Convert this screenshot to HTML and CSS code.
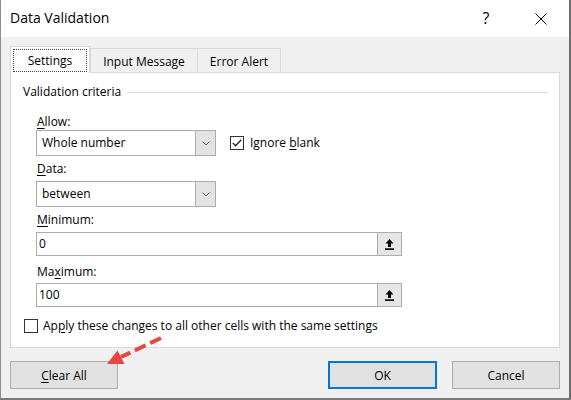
FILE: index.html
```html
<!DOCTYPE html>
<html>
<head>
<meta charset="utf-8">
<title>Data Validation</title>
<link rel="stylesheet" href="styles.css">
</head>
<body>
<div class="window">
  <div class="titlebar">
    <span class="title">Data Validation</span>
    <span class="help">?</span>
    <svg class="close" width="12" height="12" viewBox="0 0 12 12"><path d="M0.5 0.5 L11.5 11.5 M11.5 0.5 L0.5 11.5" stroke="#000" stroke-width="1" fill="none"/></svg>
  </div>
  <div class="content">
    <div class="tabs">
      <div class="tab active"><span class="focus">Settings</span></div>
      <div class="tab t2">Input Message</div>
      <div class="tab t3">Error Alert</div>
    </div>
    <div class="panel">
      <div class="group-head"><span>Validation criteria</span><span class="rule"></span></div>
      <div class="form">
        <div class="label l-allow"><u>A</u>llow:</div>
        <div class="row">
          <div class="select">
            <span class="field">Whole number</span>
            <span class="drop"><svg width="8" height="5" viewBox="0 0 8 5"><path d="M0.5 0.5 L4 4 L7.5 0.5" stroke="#606060" stroke-width="1" fill="none"/></svg></span>
          </div>
          <div class="check">
            <span class="box"><svg width="12" height="12" viewBox="0 0 12 12"><path d="M1.8 6 L4.6 8.8 L10.3 2.8" stroke="#222" stroke-width="1.3" fill="none"/></svg></span>
            <span>Ignore <u>b</u>lank</span>
          </div>
        </div>
        <div class="label l-data"><u>D</u>ata:</div>
        <div class="select s-data">
          <span class="field">between</span>
          <span class="drop"><svg width="8" height="5" viewBox="0 0 8 5"><path d="M0.5 0.5 L4 4 L7.5 0.5" stroke="#606060" stroke-width="1" fill="none"/></svg></span>
        </div>
        <div class="label l-min"><u>M</u>inimum:</div>
        <div class="input i-min">
          <span class="field">0</span>
          <span class="ref"><svg width="9" height="11" viewBox="0 0 9 11"><path d="M4.5 0 L8.5 4.5 H6 V8 H3 V4.5 H0.5 Z" fill="#000"/><rect x="0" y="9.3" width="9" height="1.6" fill="#000"/></svg></span>
        </div>
        <div class="label l-max">Ma<u>x</u>imum:</div>
        <div class="input i-max">
          <span class="field">100</span>
          <span class="ref"><svg width="9" height="11" viewBox="0 0 9 11"><path d="M4.5 0 L8.5 4.5 H6 V8 H3 V4.5 H0.5 Z" fill="#000"/><rect x="0" y="9.3" width="9" height="1.6" fill="#000"/></svg></span>
        </div>
      </div>
      <div class="apply">
        <span class="box"></span>
        <span>Ap<u>p</u>ly these changes to all other cells with the same settings</span>
      </div>
    </div>
    <div class="buttons">
      <button class="btn"><u>C</u>lear All</button>
      <span class="spacer"></span>
      <button class="btn ok">OK</button>
      <button class="btn cancel">Cancel</button>
    </div>
  </div>
  <svg class="arrow" width="70" height="40" viewBox="0 0 70 40">
    <line x1="61" y1="8" x2="21" y2="27" stroke="#e8473d" stroke-width="4" stroke-dasharray="12 5"/>
    <polygon points="7,34 17.5,20.5 24.5,34" fill="#e8473d"/>
  </svg>
</div>
</body>
</html>
```
FILE: styles.css
```css
* { box-sizing: border-box; }
html, body { margin: 0; padding: 0; }
body {
  width: 571px;
  height: 400px;
  overflow: hidden;
  background: #f0f0f0;
  font-family: "Open Sans", "Noto Sans", sans-serif;
  font-size: 12px;
  line-height: 16px;
  color: #000;
}
u { text-decoration: underline; text-underline-offset: 2px; text-decoration-thickness: 1px; }

.window {
  position: relative;
  width: 571px;
  height: 400px;
  border-left: 1px solid #8e8e8e;
  border-right: 2px solid #6e6e6e;
  border-bottom: 2px solid #7a7a7a;
  background: #f0f0f0;
  display: flex;
  flex-direction: column;
}

.titlebar {
  height: 37px;
  flex: none;
  background: #fff;
  display: flex;
  align-items: center;
  padding-left: 9px;
}
.title { flex: 1; font-size: 14px; line-height: 20px; margin-top: -1px; }
.help { width: 14px; text-align: center; font-size: 16px; line-height: 20px; margin-right: 42px; margin-top: -1px; }
.close { display: block; margin-right: 22px; }

.content {
  flex: 1;
  padding: 9px 9px 0 9px;
  display: flex;
  flex-direction: column;
}

.tabs {
  display: flex;
  align-items: flex-end;
  height: 27px;
  margin-bottom: -1px;
  position: relative;
  z-index: 1;
}
.tab {
  height: 24px;
  margin-bottom: 1px;
  border: 1px solid #d9d9d9;
  border-bottom: none;
  background: #f0f0f0;
  display: flex;
  align-items: center;
  justify-content: center;
  padding-top: 2px;
}
.tab.active {
  width: 80px;
  height: 27px;
  margin-bottom: 0;
  background: #fff;
  padding-top: 0;
}
.tab.t2 { width: 108px; }
.tab.t3 { width: 83px; border-left: none; }
.focus {
  width: 74px;
  height: 23px;
  border: 1px dotted #444;
  display: flex;
  align-items: center;
  justify-content: center;
  padding-top: 1px;
}

.panel {
  height: 276px;
  flex: none;
  background: #fff;
  border: 1px solid #d9d9d9;
  padding: 11px 11px 0 12px;
}
.group-head {
  display: flex;
  align-items: center;
  height: 16px;
}
.rule { flex: 1; height: 1px; background: #dcdcdc; margin-left: 6px; }

.form { padding-left: 13px; }
.label { height: 16px; padding-left: 1px; }
.l-allow { margin-top: 14px; }
.l-data { margin-top: 5px; }
.l-min { margin-top: 5px; }
.l-max { margin-top: 8px; }

.row { display: flex; align-items: center; }

.select { display: flex; width: 180px; height: 26px; }
.s-data { margin-top: 4px; }
.select .field {
  flex: 1;
  border: 1px solid #acacac;
  border-right: none;
  padding-left: 5px;
  display: flex;
  align-items: center;
}
.drop {
  width: 21px;
  border: 1px solid #adadad;
  background: #e3e3e3;
  display: flex;
  align-items: center;
  justify-content: center;
}
.drop svg { display: block; }

.check { display: flex; align-items: center; margin-left: 14px; }
.box {
  width: 14px;
  height: 14px;
  border: 1px solid #333;
  background: #fff;
  display: flex;
  align-items: center;
  justify-content: center;
  margin-right: 6px;
}
.box svg { display: block; }

.input { display: flex; width: 366px; height: 24px; }
.i-min { margin-top: 4px; }
.i-max { margin-top: 3px; }
.input .field {
  flex: 1;
  border: 1px solid #acacac;
  border-right: none;
  padding-left: 2px;
  display: flex;
  align-items: center;
}
.ref {
  width: 25px;
  border: 1px solid #adadad;
  background: #e6e6e6;
  display: flex;
  align-items: center;
  justify-content: center;
}
.ref svg { display: block; }

.apply {
  display: flex;
  align-items: center;
  margin-top: 11px;
  height: 16px;
  padding-left: 1px;
}
.apply .box { margin-right: 5px; }

.buttons {
  display: flex;
  margin-top: 13px;
  height: 28px;
}
.spacer { flex: 1; }
.btn {
  height: 28px;
  width: 108px;
  border: 1px solid #adadad;
  background: #e1e1e1;
  font-family: inherit;
  font-size: 12px;
  color: #000;
  padding: 0;
  margin: 0;
}
.btn.ok { width: 109px; border: 2px solid #0078d7; margin-right: 15px; }

.arrow { position: absolute; left: 99px; top: 330px; }
```
